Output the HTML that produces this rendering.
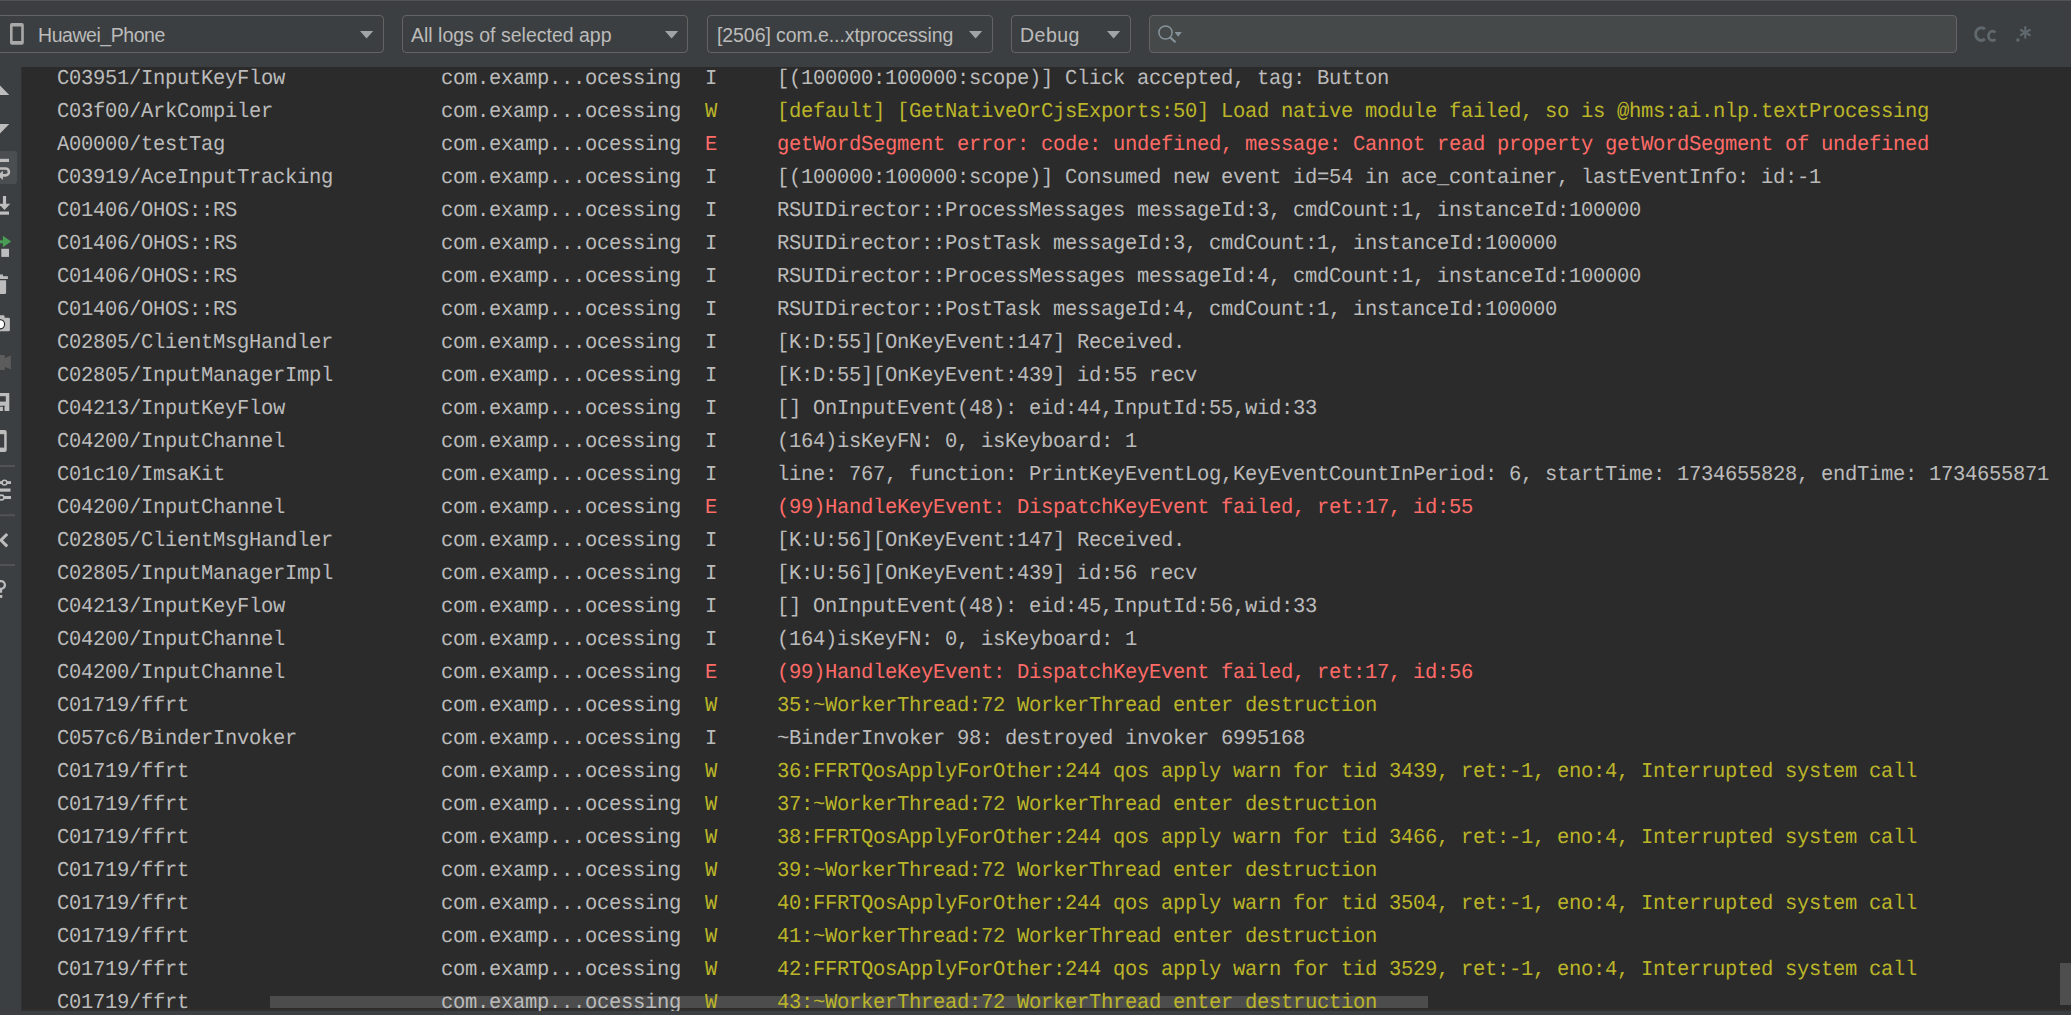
<!DOCTYPE html>
<html><head><meta charset="utf-8"><title>Log</title>
<style>
html,body{margin:0;padding:0;width:2071px;height:1015px;overflow:hidden;background:#3c3f41;position:relative}
#topline{position:absolute;left:0;top:0;width:2071px;height:1px;background:#535353}
.dd{position:absolute;top:15px;height:38px;box-sizing:border-box;border:1px solid #646464;border-radius:4px}
.tx{position:absolute;top:24px;line-height:22px;font-family:"Liberation Sans",sans-serif;font-size:19.5px;color:#bbbbbb;white-space:pre}
#log{position:absolute;left:21px;top:67px;width:2050px;height:944px;background:#2b2b2b;overflow:hidden}
.r{position:absolute;left:36px;height:33px;line-height:33px;white-space:pre;text-rendering:geometricPrecision;font-family:"Liberation Mono",monospace;font-size:20.5px;letter-spacing:-0.302px;transform:scaleY(1.035);transform-origin:0 21.955px}
.g{color:#bbbbbb} .i{color:#bbbbbb} .w{color:#bbb529} .e{color:#ff6b68}
#bottom{position:absolute;left:0;top:1011px;width:2071px;height:4px;background:#3c3f41}
#htrack{position:absolute;left:0;top:942px;width:2050px;height:2px;background:#303030}
#hthumb{position:absolute;left:249px;top:929px;width:1158px;height:12px;background:#4c4c4c}
#vthumb{position:absolute;left:2039px;top:896px;width:11px;height:42px;background:#4e4e4e}
</style></head><body>
<div id="topline"></div>
<div class="dd" style="left:-4px;width:388px"></div>
<svg style="position:absolute;left:0;top:0" width="30" height="60" viewBox="0 0 30 60"><path fill-rule="evenodd" fill="#a9a9a9" d="M12 23 H21.8 Q23.8 23 23.8 25 V42.8 Q23.8 44.8 21.8 44.8 H12 Q10 44.8 10 42.8 V25 Q10 23 12 23 Z M12.6 26.6 V40.9 H21.2 V26.6 Z"/></svg>
<span class="tx" style="left:38px;letter-spacing:-0.45px">Huawei_Phone</span>
<svg style="position:absolute;left:360px;top:31px" width="14" height="8" viewBox="0 0 14 8"><polygon points="0,0 13.2,0 6.6,7.5" fill="#a0a3a7"/></svg>
<div class="dd" style="left:402px;width:286px"></div>
<span class="tx" style="left:411px">All logs of selected app</span>
<svg style="position:absolute;left:665px;top:31px" width="14" height="8" viewBox="0 0 14 8"><polygon points="0,0 13.2,0 6.6,7.5" fill="#a0a3a7"/></svg>
<div class="dd" style="left:707px;width:286px"></div>
<span class="tx" style="left:717px;letter-spacing:-0.08px">[2506] com.e...xtprocessing</span>
<svg style="position:absolute;left:969px;top:31px" width="14" height="8" viewBox="0 0 14 8"><polygon points="0,0 13.2,0 6.6,7.5" fill="#a0a3a7"/></svg>
<div class="dd" style="left:1011px;width:120px"></div>
<span class="tx" style="left:1020px;letter-spacing:0.5px">Debug</span>
<svg style="position:absolute;left:1107px;top:31px" width="14" height="8" viewBox="0 0 14 8"><polygon points="0,0 13.2,0 6.6,7.5" fill="#a0a3a7"/></svg>
<div class="dd" style="left:1149px;width:808px;background:#45494a"></div>
<svg style="position:absolute;left:1150px;top:16px" width="40" height="36" viewBox="1150 16 40 36"><circle cx="1165.5" cy="32.5" r="6.6" fill="none" stroke="#87939a" stroke-width="1.5"/><line x1="1170" y1="37.3" x2="1175.5" y2="42.3" stroke="#87939a" stroke-width="2.2"/><polygon points="1174.6,32 1181.8,32 1178.2,36.8" fill="#87939a"/></svg>
<svg style="position:absolute;left:1970px;top:20px" width="70" height="28" viewBox="1970 20 70 28">
<path d="M1984.9 29.15 A5.6 6.4 0 1 0 1984.9 38.95" fill="none" stroke="#5f686d" stroke-width="3"/>
<path d="M1995.3 32.56 A4.0 4.65 0 1 0 1995.3 39.14" fill="none" stroke="#5f686d" stroke-width="2.8"/>
<circle cx="2017.9" cy="40" r="1.8" fill="#5f686d"/>
<g stroke="#5f686d" stroke-width="2.2" stroke-linecap="round"><line x1="2025.3" y1="27.2" x2="2025.3" y2="37.8"/><line x1="2020.9" y1="30" x2="2029.7" y2="35"/><line x1="2020.9" y1="35" x2="2029.7" y2="30"/></g>
</svg>
<svg id="sidesvg" width="21" height="1015" viewBox="0 0 21 1015" style="position:absolute;left:0;top:0">
<polygon points="0,85.5 9.3,95 0,95" fill="#bdbdbd"/>
<polygon points="0,124 9.3,124 0,133.5" fill="#bdbdbd"/>
<rect x="-4" y="151" width="21" height="33" rx="3" fill="#4a4e51"/>
<rect x="-1" y="158.8" width="10" height="3.2" fill="#bdbdbd"/>
<path d="M-1 168.5 H5.5 A3.45 3.45 0 0 1 5.5 175.4 H2" fill="none" stroke="#bdbdbd" stroke-width="2.6"/>
<polygon points="2.9,170.8 2.9,180 -2.3,175.4" fill="#bdbdbd"/>
<rect x="2.9" y="196" width="3.2" height="9" fill="#bdbdbd"/>
<polygon points="-1.3,203.8 10.3,203.8 4.5,210" fill="#bdbdbd"/>
<rect x="-1" y="211.5" width="10" height="3.2" fill="#bdbdbd"/>
<rect x="-1" y="240.3" width="4.5" height="3" fill="#499c54"/>
<polygon points="2.9,235.8 11.2,241.6 2.9,247.2" fill="#499c54"/>
<rect x="1.3" y="248.8" width="7.7" height="8.1" fill="#bdbdbd"/>
<rect x="-1" y="274.5" width="4" height="3" fill="#bdbdbd"/>
<rect x="-1" y="276.2" width="8.9" height="2.8" fill="#bdbdbd"/>
<path d="M-1 280.3 H6.1 V292.5 Q6.1 294 4.6 294 H-1 Z" fill="#bdbdbd"/>
<path d="M-5 317.8 H8.5 Q9.9 317.8 9.9 319.2 V329.9 Q9.9 331.3 8.5 331.3 H-5 Z" fill="#bdbdbd"/>
<rect x="-3" y="315.3" width="7.5" height="4" rx="1" fill="#bdbdbd"/>
<circle cx="0" cy="324.2" r="4.6" fill="#ffffff" stroke="#2b2b2b" stroke-width="1.2"/>
<rect x="-1" y="355" width="5.8" height="15" rx="1" fill="#5c5c5c"/>
<polygon points="4.5,358.3 10.9,355.6 10.9,369.4 4.5,366.7" fill="#5c5c5c"/>
<rect x="-1" y="393" width="10.3" height="18" fill="#bdbdbd"/>
<rect x="-1" y="396.2" width="6.8" height="5.4" fill="#3c3f41"/>
<rect x="-1" y="405.8" width="5.5" height="1" fill="#3c3f41"/>
<rect x="2.9" y="405.8" width="1.6" height="5.2" fill="#3c3f41"/>
<rect x="-4" y="430" width="10.7" height="22.1" rx="2" fill="#bdbdbd"/>
<rect x="-1" y="434.2" width="5.2" height="13.4" fill="#3c3f41"/>
<rect x="0" y="465" width="15" height="2" fill="#505254"/>
<rect x="-1" y="481.2" width="12" height="2.8" fill="#bdbdbd"/>
<circle cx="4.5" cy="482.6" r="2.4" fill="#3c3f41" stroke="#bdbdbd" stroke-width="1.6"/>
<rect x="-1" y="488.5" width="11.5" height="3.2" fill="#bdbdbd"/>
<rect x="-1" y="496" width="12" height="3" fill="#bdbdbd"/>
<circle cx="1.5" cy="497.5" r="2.4" fill="#3c3f41" stroke="#bdbdbd" stroke-width="1.6"/>
<rect x="0" y="514.2" width="15" height="2" fill="#505254"/>
<polyline points="7.2,534 1,540.2 7.2,546.4" fill="none" stroke="#bdbdbd" stroke-width="3"/>
<rect x="0" y="564" width="15" height="2" fill="#505254"/>
<path d="M-2.9 585 A3.9 3.9 0 1 1 1 588.9 V592.8" fill="none" stroke="#bdbdbd" stroke-width="2.3"/>
<rect x="-1" y="595" width="3.3" height="2.9" fill="#bdbdbd"/>
</svg>
<div id="log">
<div style="position:absolute;left:0;top:0;width:1px;height:944px;background:#313131"></div>
<div id="htrack"></div>
<div id="hthumb"></div>
<div id="vthumb"></div>
<div class="r" style="top:-4px"><span class="g">C03951/InputKeyFlow             com.examp...ocessing  </span><span class="i">I     [(100000:100000:scope)] Click accepted, tag: Button</span></div>
<div class="r" style="top:29px"><span class="g">C03f00/ArkCompiler              com.examp...ocessing  </span><span class="w">W     [default] [GetNativeOrCjsExports:50] Load native module failed, so is @hms:ai.nlp.textProcessing</span></div>
<div class="r" style="top:62px"><span class="g">A00000/testTag                  com.examp...ocessing  </span><span class="e">E     getWordSegment error: code: undefined, message: Cannot read property getWordSegment of undefined</span></div>
<div class="r" style="top:95px"><span class="g">C03919/AceInputTracking         com.examp...ocessing  </span><span class="i">I     [(100000:100000:scope)] Consumed new event id=54 in ace_container, lastEventInfo: id:-1</span></div>
<div class="r" style="top:128px"><span class="g">C01406/OHOS::RS                 com.examp...ocessing  </span><span class="i">I     RSUIDirector::ProcessMessages messageId:3, cmdCount:1, instanceId:100000</span></div>
<div class="r" style="top:161px"><span class="g">C01406/OHOS::RS                 com.examp...ocessing  </span><span class="i">I     RSUIDirector::PostTask messageId:3, cmdCount:1, instanceId:100000</span></div>
<div class="r" style="top:194px"><span class="g">C01406/OHOS::RS                 com.examp...ocessing  </span><span class="i">I     RSUIDirector::ProcessMessages messageId:4, cmdCount:1, instanceId:100000</span></div>
<div class="r" style="top:227px"><span class="g">C01406/OHOS::RS                 com.examp...ocessing  </span><span class="i">I     RSUIDirector::PostTask messageId:4, cmdCount:1, instanceId:100000</span></div>
<div class="r" style="top:260px"><span class="g">C02805/ClientMsgHandler         com.examp...ocessing  </span><span class="i">I     [K:D:55][OnKeyEvent:147] Received.</span></div>
<div class="r" style="top:293px"><span class="g">C02805/InputManagerImpl         com.examp...ocessing  </span><span class="i">I     [K:D:55][OnKeyEvent:439] id:55 recv</span></div>
<div class="r" style="top:326px"><span class="g">C04213/InputKeyFlow             com.examp...ocessing  </span><span class="i">I     [] OnInputEvent(48): eid:44,InputId:55,wid:33</span></div>
<div class="r" style="top:359px"><span class="g">C04200/InputChannel             com.examp...ocessing  </span><span class="i">I     (164)isKeyFN: 0, isKeyboard: 1</span></div>
<div class="r" style="top:392px"><span class="g">C01c10/ImsaKit                  com.examp...ocessing  </span><span class="i">I     line: 767, function: PrintKeyEventLog,KeyEventCountInPeriod: 6, startTime: 1734655828, endTime: 1734655871</span></div>
<div class="r" style="top:425px"><span class="g">C04200/InputChannel             com.examp...ocessing  </span><span class="e">E     (99)HandleKeyEvent: DispatchKeyEvent failed, ret:17, id:55</span></div>
<div class="r" style="top:458px"><span class="g">C02805/ClientMsgHandler         com.examp...ocessing  </span><span class="i">I     [K:U:56][OnKeyEvent:147] Received.</span></div>
<div class="r" style="top:491px"><span class="g">C02805/InputManagerImpl         com.examp...ocessing  </span><span class="i">I     [K:U:56][OnKeyEvent:439] id:56 recv</span></div>
<div class="r" style="top:524px"><span class="g">C04213/InputKeyFlow             com.examp...ocessing  </span><span class="i">I     [] OnInputEvent(48): eid:45,InputId:56,wid:33</span></div>
<div class="r" style="top:557px"><span class="g">C04200/InputChannel             com.examp...ocessing  </span><span class="i">I     (164)isKeyFN: 0, isKeyboard: 1</span></div>
<div class="r" style="top:590px"><span class="g">C04200/InputChannel             com.examp...ocessing  </span><span class="e">E     (99)HandleKeyEvent: DispatchKeyEvent failed, ret:17, id:56</span></div>
<div class="r" style="top:623px"><span class="g">C01719/ffrt                     com.examp...ocessing  </span><span class="w">W     35:~WorkerThread:72 WorkerThread enter destruction</span></div>
<div class="r" style="top:656px"><span class="g">C057c6/BinderInvoker            com.examp...ocessing  </span><span class="i">I     ~BinderInvoker 98: destroyed invoker 6995168</span></div>
<div class="r" style="top:689px"><span class="g">C01719/ffrt                     com.examp...ocessing  </span><span class="w">W     36:FFRTQosApplyForOther:244 qos apply warn for tid 3439, ret:-1, eno:4, Interrupted system call</span></div>
<div class="r" style="top:722px"><span class="g">C01719/ffrt                     com.examp...ocessing  </span><span class="w">W     37:~WorkerThread:72 WorkerThread enter destruction</span></div>
<div class="r" style="top:755px"><span class="g">C01719/ffrt                     com.examp...ocessing  </span><span class="w">W     38:FFRTQosApplyForOther:244 qos apply warn for tid 3466, ret:-1, eno:4, Interrupted system call</span></div>
<div class="r" style="top:788px"><span class="g">C01719/ffrt                     com.examp...ocessing  </span><span class="w">W     39:~WorkerThread:72 WorkerThread enter destruction</span></div>
<div class="r" style="top:821px"><span class="g">C01719/ffrt                     com.examp...ocessing  </span><span class="w">W     40:FFRTQosApplyForOther:244 qos apply warn for tid 3504, ret:-1, eno:4, Interrupted system call</span></div>
<div class="r" style="top:854px"><span class="g">C01719/ffrt                     com.examp...ocessing  </span><span class="w">W     41:~WorkerThread:72 WorkerThread enter destruction</span></div>
<div class="r" style="top:887px"><span class="g">C01719/ffrt                     com.examp...ocessing  </span><span class="w">W     42:FFRTQosApplyForOther:244 qos apply warn for tid 3529, ret:-1, eno:4, Interrupted system call</span></div>
<div class="r" style="top:920px"><span class="g">C01719/ffrt                     com.examp...ocessing  </span><span class="w">W     43:~WorkerThread:72 WorkerThread enter destruction</span></div>
</div>
<div id="bottom"></div>
</body></html>
